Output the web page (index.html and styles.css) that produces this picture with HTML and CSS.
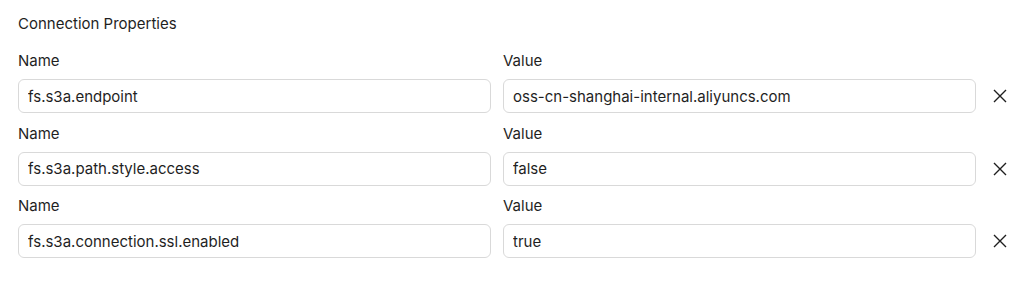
FILE: index.html
```html
<!DOCTYPE html>
<html>
<head>
<meta charset="utf-8">
<link rel="stylesheet" href="styles.css">
</head>
<body>
<div class="panel">
  <div class="title">Connection Properties</div>
  <div class="rows">
    <div class="row">
      <div class="field">
        <label class="label">Name</label>
        <input class="input" value="fs.s3a.endpoint">
      </div>
      <div class="field">
        <label class="label">Value</label>
        <input class="input" value="oss-cn-shanghai-internal.aliyuncs.com">
      </div>
      <button class="remove" aria-label="Remove">
        <svg width="14" height="14" viewBox="0 0 14 14"><path d="M1 1L13 13M13 1L1 13" stroke="#1f1f1f" stroke-width="1.4" fill="none"/></svg>
      </button>
    </div>
    <div class="row">
      <div class="field">
        <label class="label">Name</label>
        <input class="input" value="fs.s3a.path.style.access">
      </div>
      <div class="field">
        <label class="label">Value</label>
        <input class="input" value="false">
      </div>
      <button class="remove" aria-label="Remove">
        <svg width="14" height="14" viewBox="0 0 14 14"><path d="M1 1L13 13M13 1L1 13" stroke="#1f1f1f" stroke-width="1.4" fill="none"/></svg>
      </button>
    </div>
    <div class="row">
      <div class="field">
        <label class="label">Name</label>
        <input class="input" value="fs.s3a.connection.ssl.enabled">
      </div>
      <div class="field">
        <label class="label">Value</label>
        <input class="input" value="true">
      </div>
      <button class="remove" aria-label="Remove">
        <svg width="14" height="14" viewBox="0 0 14 14"><path d="M1 1L13 13M13 1L1 13" stroke="#1f1f1f" stroke-width="1.4" fill="none"/></svg>
      </button>
    </div>
  </div>
</div>
</body>
</html>
```
FILE: styles.css
```css
* { box-sizing: border-box; }
html, body { margin: 0; padding: 0; background: #ffffff; }
body {
  font-family: Inter, "Noto Sans", sans-serif;
  font-size: 15px;
  color: #1f1f1f;
}
.panel {
  padding: 14px 12px 0 18px;
}
.title {
  line-height: 20px;
  margin-bottom: 17px;
}
.rows {
  display: flex;
  flex-direction: column;
  gap: 10.5px;
}
.row {
  display: grid;
  grid-template-columns: 1fr 1fr 24px;
  column-gap: 12px;
  align-items: end;
}
.field {
  display: flex;
  flex-direction: column;
  gap: 8px;
}
.label {
  line-height: 20px;
  display: block;
}
.input {
  height: 34px;
  width: 100%;
  border: 1px solid #d9d9d9;
  border-radius: 6px;
  padding: 0 9px;
  font: inherit;
  color: #1f1f1f;
  background: #fff;
  outline: none;
}
.remove {
  width: 24px;
  height: 34px;
  border: 0;
  background: transparent;
  padding: 0;
  display: flex;
  align-items: center;
  justify-content: center;
  cursor: pointer;
}
```
